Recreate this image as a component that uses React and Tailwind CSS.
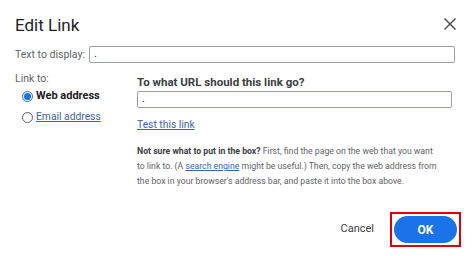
import React from 'react';

const App = () => {
  return (
    <div className="w-[474px] h-[256px] bg-white overflow-hidden text-[#3c4043]" style={{ fontFamily: 'Roboto, "Liberation Sans", sans-serif' }}>
      {/* HEADER */}
      <div className="flex items-center justify-between pl-[15px] pr-[18px] pt-[15px] h-[35px]">
        <h1 className="text-[17px] leading-[20px] text-[#202124]">Edit Link</h1>
        <svg width="12" height="12" viewBox="0 0 12 12" className="-mt-[2px]">
          <path d="M0.5 0.5 L11.5 11.5 M11.5 0.5 L0.5 11.5" stroke="#444746" strokeWidth="1.4" fill="none" />
        </svg>
      </div>

      {/* TEXT TO DISPLAY */}
      <div className="flex items-center pl-[15px] pr-[19px] mt-[11px]">
        <span className="text-[10.5px] leading-[17px] text-[#5f6368]">Text to display:</span>
        <div className="ml-[4px] flex-1 h-[17px] border border-[#9aa0a6] rounded-[2px] text-[11px] leading-[14px] pl-[4px] text-[#202124]">.</div>
      </div>

      {/* LINK TO */}
      <div className="flex mt-[9px]">
        <div className="w-[137px] pl-[15px]">
          <div className="text-[10.5px] leading-[13px] text-[#5f6368]">Link to:</div>
          <div className="flex items-center gap-[3px] pl-[7px] mt-[4px]">
            <span className="w-[11px] h-[11px] rounded-full border border-[#1a73e8] flex items-center justify-center">
              <span className="w-[7px] h-[7px] rounded-full bg-[#1a73e8]" />
            </span>
            <span className="text-[11px] leading-[14px] font-bold text-[#202124]">Web address</span>
          </div>
          <div className="flex items-center gap-[3px] pl-[7px] mt-[7px]">
            <span className="w-[11px] h-[11px] rounded-full border border-[#5f6368]" />
            <span className="text-[10.3px] leading-[14px] text-[#3c64b4] underline">Email address</span>
          </div>
        </div>

        <div className="flex-1 pr-[22px] pt-[4px]">
          <div className="text-[11.5px] leading-[13px] font-bold text-[#3c4043]">To what URL should this link go?</div>
          <div className="mt-[2px] h-[17px] border border-[#9aa0a6] rounded-[2px] text-[11px] leading-[14px] pl-[4px] text-[#202124]">.</div>
          <div className="mt-[10px] text-[10.3px] leading-[14px] text-[#3c64b4] underline">Test this link</div>
          <p className="mt-[12px] text-[8.7px] leading-[15px] text-[#5f6368]">
            <span className="font-bold text-[#3c4043]">Not sure what to put in the box?</span> First, find the page on the web that you want<br />
            to link to. (A <span className="text-[#3c64b4] underline">search engine</span> might be useful.) Then, copy the web address from<br />
            the box in your browser's address bar, and paste it into the box above.
          </p>
        </div>
      </div>

      {/* FOOTER */}
      <div className="flex items-center justify-end pr-[13px] mt-[23px]">
        <span className="text-[11px] text-[#3c4043] mr-[16px]">Cancel</span>
        <div className="border-2 border-[#d9000d] p-[2px]">
          <button className="w-[63px] h-[27px] rounded-full bg-[#1a73e8] text-white text-[12px] font-bold">OK</button>
        </div>
      </div>
    </div>
  );
};

export default App;
